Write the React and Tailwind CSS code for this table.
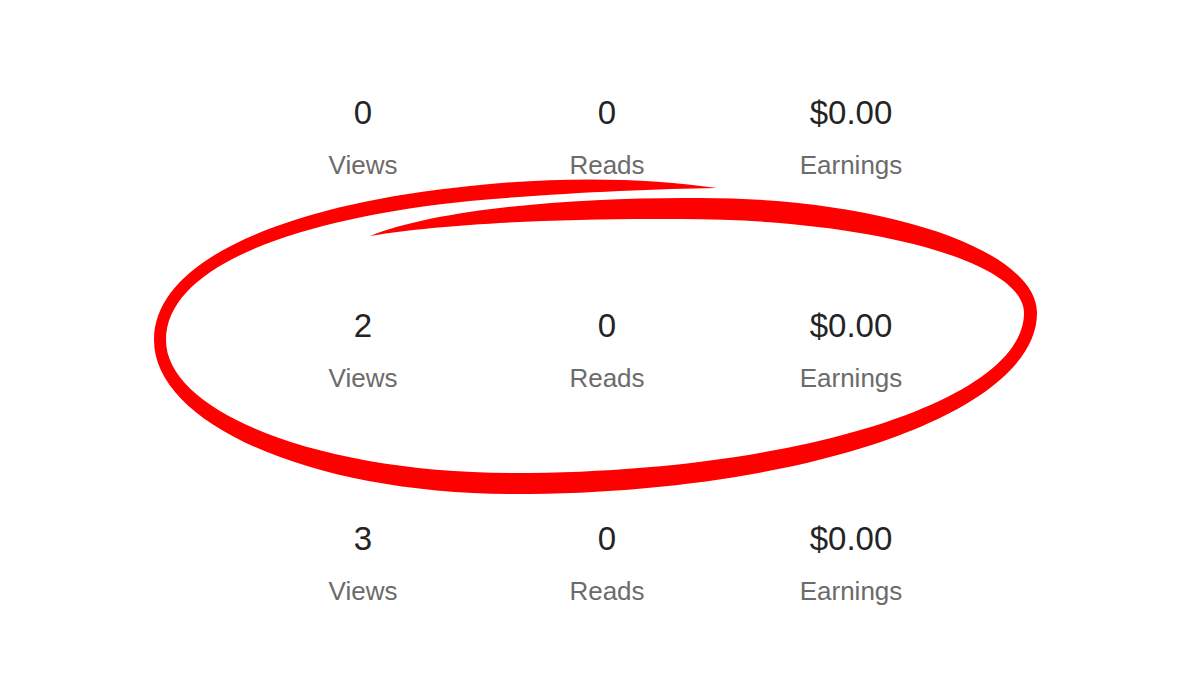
import React from "react";

const rows = [
  ["0", "0", "$0.00"],
  ["2", "0", "$0.00"],
  ["3", "0", "$0.00"],
];
const labels = ["Views", "Reads", "Earnings"];

function Scribble() {
  const d = [
    // outer edge, starting at first tip
    "M 717 188",
    "C 650 178, 560 176, 470 186",
    "C 300 203, 154 255, 154 340",
    "C 154 425, 315 494, 513 494",
    "C 802 494, 1037 413, 1037 313",
    "C 1037 250, 885 198, 700 198",
    "C 580 197, 440 208, 370 236",
    // inner edge back
    "C 440 224, 560 218, 680 219",
    "C 869 219, 1024 261, 1024 313",
    "C 1024 401, 794 473, 513 473",
    "C 322 473, 166 413, 166 340",
    "C 166 265, 300 218, 470 201",
    "C 560 193, 650 189, 717 188",
    "Z",
  ].join(" ");
  return (
    <svg
      className="absolute inset-0 pointer-events-none"
      width="1200"
      height="675"
      viewBox="0 0 1200 675"
    >
      <path d={d} fill="#ff0000" fillRule="nonzero" />
    </svg>
  );
}

export default function App() {
  return (
    <div
      className="relative w-[1200px] h-[675px] bg-white overflow-hidden"
      style={{ fontFamily: '"Liberation Sans", Arial, sans-serif' }}
    >
      <div className="pt-[93px] pl-[241px] flex flex-col gap-[125px]">
        {rows.map((r, i) => (
          <div key={i} className="grid grid-cols-[244px_244px_244px]">
            {r.map((v, j) => (
              <div key={j} className="flex flex-col items-center">
                <div className="text-[33px] leading-[40px] text-[#242424]">{v}</div>
                <div className="mt-[16px] text-[26px] leading-[32px] text-[#6b6b6b]">
                  {labels[j]}
                </div>
              </div>
            ))}
          </div>
        ))}
      </div>
      <Scribble />
    </div>
  );
}
